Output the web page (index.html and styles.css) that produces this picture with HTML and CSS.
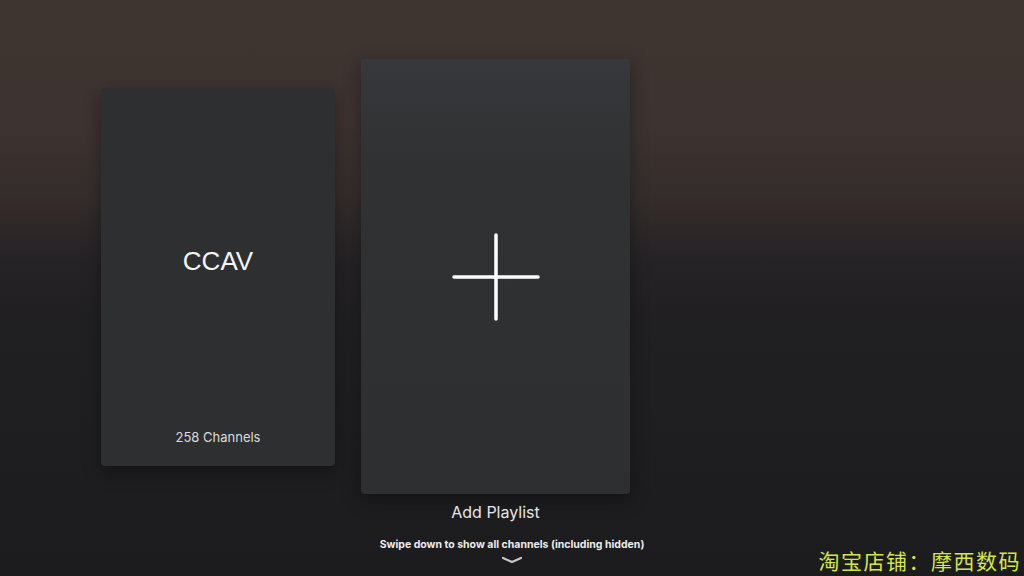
FILE: index.html
```
<!DOCTYPE html>
<html lang="zh">
<head>
    <meta charset="UTF-8">
    <title>Playlists</title>
    <link rel="stylesheet" href="styles.css">
</head>
<body>
    <div class="screen">
        <div class="shelf">
            <div class="card playlist">
                <div class="playlist-name">CCAV</div>
                <div class="playlist-count">258 Channels</div>
            </div>
            <div class="card add-card">
                <svg width="90" height="90" viewBox="0 0 90 90">
                    <path d="M45 3 V87 M3 45 H87" stroke="#fff" stroke-width="3.5" stroke-linecap="round" fill="none"/>
                </svg>
            </div>
            <div class="add-label">Add Playlist</div>
        </div>

        <div class="hint">
            <div class="hint-text">Swipe down to show all channels (including hidden)</div>
            <svg class="chevron" width="22" height="8" viewBox="0 0 22 8">
                <path d="M2 2 L11 6 L20 2" stroke="#c9c9cb" stroke-width="2.2" stroke-linecap="round" stroke-linejoin="round" fill="none"/>
            </svg>
        </div>

        <div class="watermark">淘宝店铺：摩西数码</div>
    </div>
</body>
</html>
```
FILE: styles.css
```
html, body {
    margin: 0;
    padding: 0;
}
body {
    font-family: Inter, 'Liberation Sans', sans-serif;
    color: #fff;
    background: #1c1b1d;
}
.screen {
    position: relative;
    width: 1024px;
    height: 576px;
    overflow: hidden;
    background: linear-gradient(180deg, #3e3430 0%, #3d3330 22%, #352d2b 34%, #262326 45%, #201f22 55%, #1c1b1d 100%);
    display: flex;
    flex-direction: column;
}
.shelf {
    display: grid;
    grid-template-columns: 234px 269px;
    grid-template-rows: 435px auto;
    column-gap: 26px;
    margin: 59px 0 0 101px;
}
.card {
    background: #2e2f31;
    border-radius: 4px;
    box-shadow: 0 6px 18px rgba(0, 0, 0, 0.35);
}
.playlist {
    height: 378px;
    align-self: center;
    display: flex;
    flex-direction: column;
    align-items: center;
    justify-content: space-between;
}
.playlist-name {
    font-family: 'Liberation Sans', Arial, sans-serif;
    font-size: 26px;
    margin-top: 158px;
    color: #f4f4f5;
}
.playlist-count {
    font-size: 13px;
    color: #dcdcde;
    margin-bottom: 21px;
}
.add-card {
    display: flex;
    align-items: center;
    justify-content: center;
    background: linear-gradient(180deg, #37383b 0%, #303133 25%, #2e2f31 100%);
}
.add-label {
    grid-column: 2;
    text-align: center;
    font-size: 16px;
    color: #e6e6e8;
    margin-top: 8px;
}
.hint {
    display: flex;
    flex-direction: column;
    align-items: center;
    margin-top: 16px;
}
.hint-text {
    font-size: 10.5px;
    font-weight: 700;
    color: #ececee;
}
.chevron {
    margin-top: 5px;
}
.watermark {
    position: absolute;
    right: 3px;
    bottom: 1px;
    font-family: 'Noto Sans CJK SC', sans-serif;
    font-size: 21px;
    letter-spacing: 1.5px;
    color: #d4e74a;
}
```
